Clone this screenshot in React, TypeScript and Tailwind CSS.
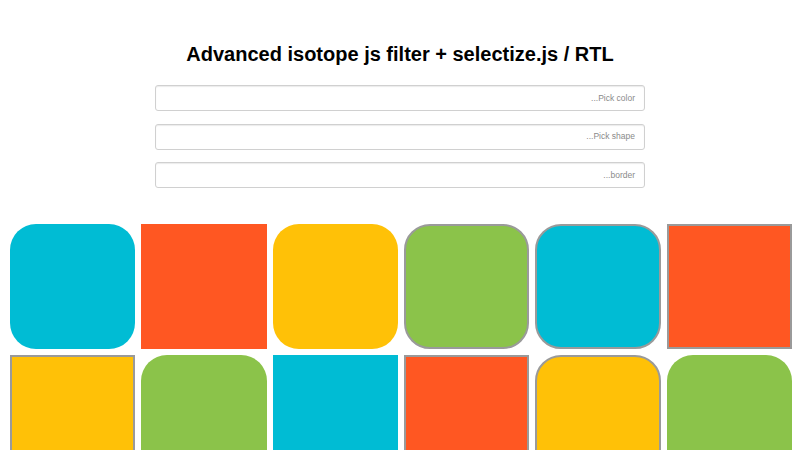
import React from 'react';

type Tile = {
  color: string;
  round: boolean;
  border: boolean;
};

const tiles: Tile[] = [
  { color: 'bg-[#00bcd4]', round: true, border: false },
  { color: 'bg-[#ff5722]', round: false, border: false },
  { color: 'bg-[#ffc107]', round: true, border: false },
  { color: 'bg-[#8bc34a]', round: true, border: true },
  { color: 'bg-[#00bcd4]', round: true, border: true },
  { color: 'bg-[#ff5722]', round: false, border: true },
  { color: 'bg-[#ffc107]', round: false, border: true },
  { color: 'bg-[#8bc34a]', round: true, border: false },
  { color: 'bg-[#00bcd4]', round: false, border: false },
  { color: 'bg-[#ff5722]', round: false, border: true },
  { color: 'bg-[#ffc107]', round: true, border: true },
  { color: 'bg-[#8bc34a]', round: true, border: false },
];

const filters = ['Pick color...', 'Pick shape...', 'border...'];

const App: React.FC = () => {
  return (
    <div className="h-[450px] overflow-hidden bg-white font-['Liberation_Sans',Arial,sans-serif]">
      <h1 className="pt-[41px] text-center text-[20px] leading-[26px] font-bold text-[#000]">
        Advanced isotope js filter + selectize.js / RTL
      </h1>

      <div className="mx-auto mt-[18px] flex w-[490px] flex-col gap-[12.5px]" dir="rtl">
        {filters.map((f) => (
          <div
            key={f}
            className="flex h-[26px] items-center rounded-[3px] border border-[#d0d0d0] bg-white px-[9px] shadow-[inset_0_1px_1px_rgba(0,0,0,0.08)]"
          >
            <span className="text-[8.5px] text-[#8a8a8a]">{f}</span>
          </div>
        ))}
      </div>

      <div className="mt-[36px] grid grid-cols-6 gap-[6px] pl-[10px] pr-[8px]">
        {tiles.map((t, i) => (
          <div
            key={i}
            className={`aspect-square ${t.color} ${t.round ? 'rounded-[26px]' : ''} ${
              t.border ? 'border-2 border-[#9a9a9a]' : ''
            }`}
          />
        ))}
      </div>
    </div>
  );
};

export default App;
